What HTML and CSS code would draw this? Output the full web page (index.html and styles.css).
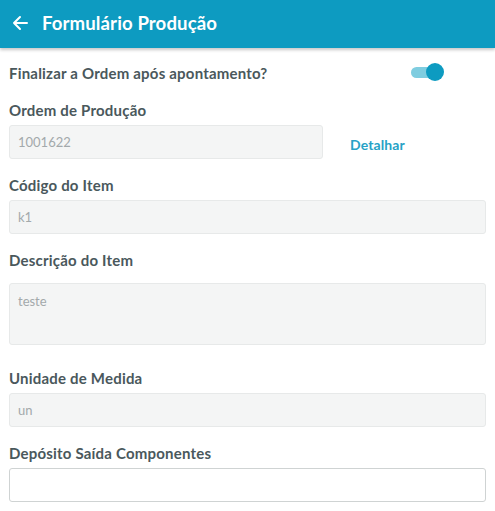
FILE: index.html
```html
<!DOCTYPE html>
<html lang="pt-BR">
<head>
<meta charset="utf-8">
<link rel="stylesheet" href="styles.css">
</head>
<body>
<header class="topbar">
  <svg class="back" width="18" height="18" viewBox="0 0 18 18" aria-hidden="true">
    <path d="M16 9H3M9 3L3 9l6 6" fill="none" stroke="#fff" stroke-width="2" stroke-linecap="round" stroke-linejoin="round"/>
  </svg>
  <h1 class="title">Formulário Produção</h1>
</header>
<main class="content">
  <div class="toggle-row">
    <span class="label">Finalizar a Ordem após apontamento?</span>
    <span class="switch"><span class="track"></span><span class="knob"></span></span>
  </div>

  <div class="field">
    <div class="label">Ordem de Produção</div>
    <div class="inline">
      <div class="input short"><span class="ph">1001622</span></div>
      <a class="link">Detalhar</a>
    </div>
  </div>

  <div class="field">
    <div class="label">Código do Item</div>
    <div class="input"><span class="ph">k1</span></div>
  </div>

  <div class="field area-field">
    <div class="label">Descrição do Item</div>
    <div class="input area"><span class="ph">teste</span></div>
  </div>

  <div class="field">
    <div class="label">Unidade de Medida</div>
    <div class="input"><span class="ph">un</span></div>
  </div>

  <div class="field">
    <div class="label">Depósito Saída Componentes</div>
    <div class="input empty"></div>
  </div>
</main>
</body>
</html>
```
FILE: styles.css
```css
html, body {
  margin: 0;
  padding: 0;
  background: #fff;
  font-family: Lato, "Open Sans", sans-serif;
}
.topbar {
  height: 48px;
  background: #0d9bc1;
  display: flex;
  align-items: center;
  padding-left: 11px;
  box-shadow: 0 2px 3px rgba(0,0,0,0.22);
  position: relative;
}
.back {
  display: block;
  margin-top: -2px;
}
.title {
  margin: 0 0 2px 13px;
  color: #fff;
  font-size: 18.6px;
  font-weight: 700;
  letter-spacing: 0.1px;
}
.content {
  padding: 0 9px;
}
.toggle-row {
  display: flex;
  align-items: center;
  height: 20px;
  margin-top: 15px;
  margin-bottom: 17px;
}
.label {
  font-size: 15px;
  font-weight: 700;
  color: #4a585c;
  line-height: 20px;
  letter-spacing: 0.2px;
}
.switch {
  position: relative;
  width: 33px;
  height: 20px;
  margin-left: auto;
  margin-right: 42px;
}
.track {
  position: absolute;
  left: 0;
  top: 4px;
  width: 30px;
  height: 11px;
  border-radius: 6px;
  background: #7fcde0;
}
.knob {
  position: absolute;
  left: 15px;
  top: 0;
  width: 18px;
  height: 18px;
  border-radius: 50%;
  background: #0d9bc1;
}
.field {
  margin-bottom: 16px;
}
.field .label {
  margin-bottom: 5px;
}
.area-field .label {
  margin-bottom: 13px;
}
.area-field {
  margin-bottom: 23px;
}
.input {
  box-sizing: border-box;
  height: 34px;
  background: #f4f5f5;
  border: 1px solid #e7e9e9;
  border-radius: 3px;
  padding: 0 8px;
  display: flex;
  align-items: center;
}
.input.area {
  height: 62px;
  align-items: flex-start;
  padding-top: 9px;
}
.input.empty {
  background: #fff;
  border-color: #cfd3d3;
}
.inline {
  display: flex;
  align-items: center;
}
.input.short {
  width: 314px;
}
.ph {
  font-size: 13px;
  color: #a3a9ab;
}
.link {
  margin-left: 27px;
  margin-top: 5px;
  font-size: 14px;
  font-weight: 700;
  color: #27a2c6;
  letter-spacing: 0.1px;
}
```
